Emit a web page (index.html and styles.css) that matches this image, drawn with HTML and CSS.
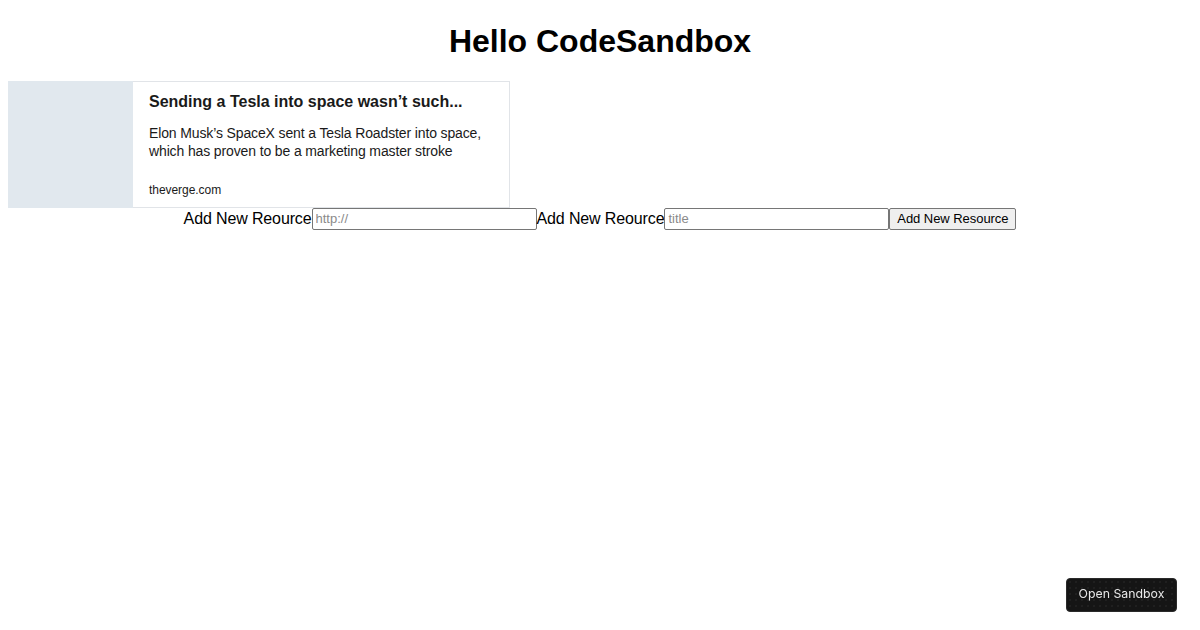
FILE: index.html
```html
<!DOCTYPE html>
<html>
<head>
<meta charset="utf-8">
<link rel="stylesheet" href="styles.css">
</head>
<body>
<div class="app">
  <h1 class="title">Hello CodeSandbox</h1>
  <div class="card">
    <div class="card-image"></div>
    <div class="card-body">
      <div class="card-title">Sending a Tesla into space wasn’t such...</div>
      <div class="card-desc">Elon Musk’s SpaceX sent a Tesla Roadster into space, which has proven to be a marketing master stroke</div>
      <div class="card-domain">theverge.com</div>
    </div>
  </div>
  <div class="form"><label class="label">Add New Reource</label><input class="field" type="text" placeholder="http://"><label class="label">Add New Reource</label><input class="field" type="text" placeholder="title"><button class="btn">Add New Resource</button></div>
</div>
<a class="open-sandbox">Open Sandbox</a>
</body>
</html>
```
FILE: styles.css
```css
html, body { margin: 0; padding: 0; background: #fff; }
body { margin: 8px; font-family: "Liberation Sans", Arial, sans-serif; color: #000; }
.app { text-align: center; }
.title { font-size: 32px; font-weight: bold; margin: 15px 0 21px; line-height: 37px; }
.card { display: flex; width: 502px; height: 127px; text-align: left; box-sizing: border-box; }
.card-image { width: 125px; flex: none; background: #e1e8ee; }
.card-body { flex: 1; border: 1px solid #e1e4e8; border-left: none; padding: 10px 15px 9px 16px; display: flex; flex-direction: column; color: #1a1a1a; }
.card-title { font-size: 16px; font-weight: bold; line-height: 20px; margin-bottom: 12px; }
.card-desc { font-size: 14px; line-height: 18px; flex: 1; letter-spacing: -0.13px; }
.card-domain { font-size: 12px; line-height: 16px; letter-spacing: -0.05px; }
.form { display: flex; justify-content: center; align-items: center; height: 22px; }
.label { font-size: 16px; line-height: 18px; letter-spacing: -0.13px; padding-bottom: 1px; }
.field { width: 225px; height: 22px; box-sizing: border-box; font-family: "Liberation Sans", Arial, sans-serif; font-size: 13px; border: 1px solid #767676; border-radius: 2px; padding: 0 3px 1px; margin: 0; }
.field::placeholder { color: #8a8a8a; }
.btn { height: 22px; width: 127px; box-sizing: border-box; font-family: "Liberation Sans", Arial, sans-serif; font-size: 13px; padding: 0 4px 1px; margin: 0; background: #efefef; border: 1px solid #767676; border-radius: 2px; color: #000; letter-spacing: -0.05px; }
.open-sandbox { position: fixed; right: 23px; bottom: 18px; width: 111px; height: 34px; box-sizing: border-box; padding-bottom: 3px; background-color: #151515; background-image: radial-gradient(circle, #2c2c2c 0.6px, transparent 0.8px); background-size: 6px 6px; color: #e8e8e8; border: 1px solid #2a2a2a; border-radius: 4px; font-size: 12.3px; display: flex; align-items: center; justify-content: center; font-family: "Inter", "Liberation Sans", sans-serif; }
```
